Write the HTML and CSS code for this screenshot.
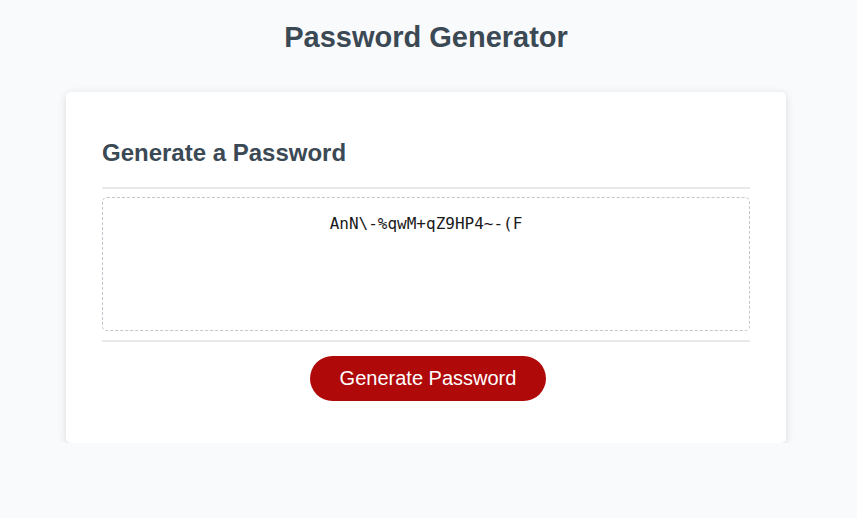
FILE: index.html
```html
<!DOCTYPE html>
<html lang="en">
<head>
<meta charset="UTF-8">
<title>Password Generator</title>
<link rel="stylesheet" href="styles.css">
</head>
<body>
<div class="wrapper">
  <header class="page-header">
    <h1 class="title">Password Generator</h1>
  </header>
  <div class="card">
    <div class="card-header">
      <h2 class="card-title">Generate a Password</h2>
    </div>
    <div class="card-body">
      <textarea class="password" readonly>AnN\-%qwM+qZ9HP4~-(F</textarea>
    </div>
    <div class="card-footer">
      <button class="btn">Generate Password</button>
    </div>
  </div>
</div>
</body>
</html>
```

FILE: styles.css
```css
*, *::before, *::after { box-sizing: border-box; }
html, body { margin: 0; padding: 0; }
body {
  font-family: "Liberation Sans", Arial, sans-serif;
  background-color: #f9fafc;
  color: #3b4954;
}
.wrapper {
  padding: 21px 5px 0 0;
}
.page-header { text-align: center; }
.title {
  margin: 0;
  font-size: 29px;
  line-height: 32px;
  font-weight: bold;
  color: #3b4954;
}
.card {
  margin: 39px auto 0;
  width: 720px;
  background: #fff;
  border-radius: 5px;
  box-shadow: 0 2px 8px rgba(0, 0, 0, 0.13);
  padding: 47px 36px 42px;
}
.card-header::after {
  content: "";
  display: block;
  height: 2px;
  background: #e7e9eb;
  margin-top: 20px;
}
.card-title {
  margin: 0;
  font-size: 24px;
  line-height: 28px;
  font-weight: bold;
  color: #3b4954;
}
.card-body { padding: 8px 0 9px; }
.password {
  display: block;
  width: 100%;
  height: 134px;
  margin: 0;
  border: 1px dashed #c0c7cf;
  border-radius: 5px;
  resize: none;
  overflow: hidden;
  padding: 16px 15px 0;
  font-family: "DejaVu Sans Mono", monospace;
  font-size: 16px;
  line-height: 19px;
  color: #1a1a1a;
  text-align: center;
  background: #fff;
  outline: none;
}
.card-footer { text-align: center; }
.card-footer::before {
  content: "";
  display: block;
  height: 2px;
  background: #e7e9eb;
  margin-bottom: 14px;
}
.btn {
  border: none;
  background-color: #af0909;
  color: #fff;
  border-radius: 23px;
  height: 45px;
  padding: 0 30px;
  font-family: "Liberation Sans", Arial, sans-serif;
  font-size: 20px;
  line-height: 45px;
  cursor: pointer;
  margin-left: 4px;
  vertical-align: top;
}
```
